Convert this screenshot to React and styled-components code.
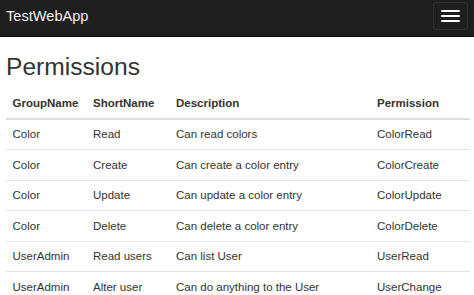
import React from 'react'
import styled, { createGlobalStyle } from 'styled-components'

const GlobalStyle = createGlobalStyle`
  html, body {
    margin: 0;
    padding: 0;
    background: #fff;
  }
  body {
    font-family: "Liberation Sans", Arial, sans-serif;
    font-size: 11.5px;
    line-height: 1.42857;
    color: #333;
  }
`

const Navbar = styled.nav`
  height: 36px;
  background: #1f1f1f;
  border-bottom: 1px solid #080808;
  display: flex;
  align-items: center;
  justify-content: space-between;
  padding: 0 6px;
`

const Brand = styled.a`
  color: #f2f2f2;
  font-size: 14.6px;
  line-height: 1;
  text-decoration: none;
  margin-top: -3px;
`

const Toggle = styled.button`
  width: 35px;
  height: 28px;
  margin-top: -4px;
  background: transparent;
  border: 1px solid #333;
  border-radius: 3px;
  padding: 0;
  display: flex;
  flex-direction: column;
  align-items: center;
  justify-content: center;
  gap: 3px;
`

const Bar = styled.span`
  display: block;
  width: 19px;
  height: 2px;
  border-radius: 1px;
  background: #fff;
`

const Container = styled.main`
  padding: 0 4px 0 6px;
`

const Title = styled.h1`
  margin: 15.5px 0 9px;
  font-size: 24.6px;
  font-weight: 400;
  line-height: 1.1;
  color: #333;
`

const Table = styled.table`
  width: 100%;
  border-collapse: collapse;
  table-layout: fixed;
`

const Th = styled.th`
  box-sizing: border-box;
  width: ${p => p.$w || 'auto'};
  text-align: left;
  font-weight: 700;
  padding: 6.5px;
  border-bottom: 2px solid #ddd;
  vertical-align: bottom;
  white-space: nowrap;
`

const Td = styled.td`
  padding: 6.5px;
  border-top: 1px solid #e3e3e3;
  white-space: nowrap;
`

const rows = [
  ['Color', 'Read', 'Can read colors', 'ColorRead'],
  ['Color', 'Create', 'Can create a color entry', 'ColorCreate'],
  ['Color', 'Update', 'Can update a color entry', 'ColorUpdate'],
  ['Color', 'Delete', 'Can delete a color entry', 'ColorDelete'],
  ['UserAdmin', 'Read users', 'Can list User', 'UserRead'],
  ['UserAdmin', 'Alter user', 'Can do anything to the User', 'UserChange'],
]

export default function App() {
  return (
    <>
      <GlobalStyle />
      <Navbar>
        <Brand href="#">TestWebApp</Brand>
        <Toggle aria-label="Toggle navigation">
          <Bar />
          <Bar />
          <Bar />
        </Toggle>
      </Navbar>
      <Container>
        <Title>Permissions</Title>
        <Table>
          <thead>
            <tr>
              <Th $w="80.5px">GroupName</Th>
              <Th $w="83px">ShortName</Th>
              <Th $w="201px">Description</Th>
              <Th>Permission</Th>
            </tr>
          </thead>
          <tbody>
            {rows.map(r => (
              <tr key={r[3]}>
                {r.map((c, i) => (
                  <Td key={i}>{c}</Td>
                ))}
              </tr>
            ))}
          </tbody>
        </Table>
      </Container>
    </>
  )
}
